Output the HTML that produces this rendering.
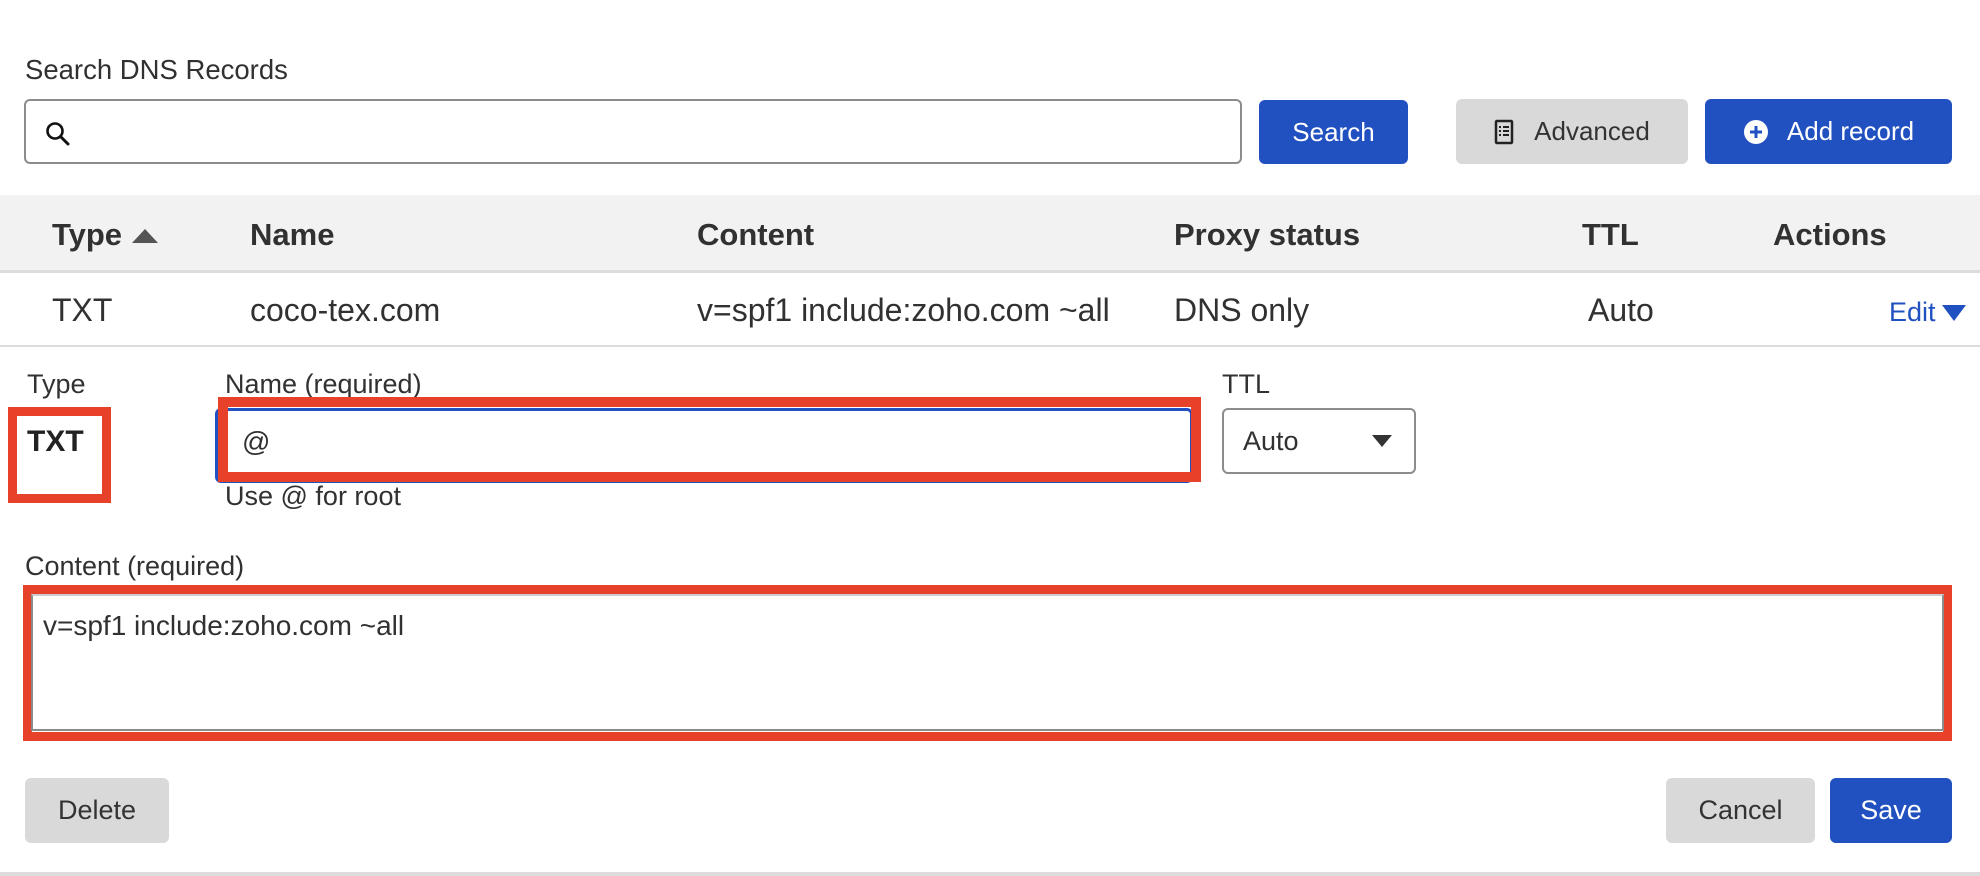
<!DOCTYPE html>
<html><head><meta charset="utf-8"><style>
*{box-sizing:border-box;margin:0;padding:0}
body{width:1980px;height:876px;background:#fff;font-family:"Liberation Sans",sans-serif;color:#313131;position:relative;overflow:hidden}
.a{position:absolute;white-space:nowrap}
.btn{position:absolute;border-radius:6px;display:flex;align-items:center;justify-content:center;font-size:26px}
.blue{background:#2150c0;color:#fff}
.gray{background:#d9d9d9;color:#333}
.th{font-weight:bold;font-size:31px;top:217px}
.td{font-size:32px;top:292px}
.lbl{font-size:27px}
</style></head><body>
<div class="a lbl" style="left:25px;top:54px;font-size:27.5px">Search DNS Records</div>
<div class="a" style="left:24px;top:99px;width:1218px;height:65px;border:2px solid #8c8c8c;border-radius:6px"></div>
<svg class="a" style="left:44px;top:120px" width="28" height="28" viewBox="0 0 28 28"><circle cx="11" cy="11" r="7.5" fill="none" stroke="#111" stroke-width="2.6"/><path d="M16.5 16.5L24 24" stroke="#111" stroke-width="3" stroke-linecap="round"/></svg>
<div class="btn blue" style="left:1259px;top:100px;width:149px;height:64px">Search</div>
<div class="btn gray" style="left:1456px;top:99px;width:232px;height:65px"><svg width="20" height="26" viewBox="0 0 20 26" style="margin-right:20px"><rect x="2" y="2" width="16" height="22" rx="1" fill="none" stroke="#222" stroke-width="2.5"/><path d="M5 8h2M9 8h6M5 12h2M9 12h6M5 16h2M9 16h6" stroke="#222" stroke-width="2"/></svg>Advanced</div>
<div class="btn blue" style="left:1705px;top:99px;width:247px;height:65px"><svg width="26" height="26" viewBox="0 0 26 26" style="margin-right:18px"><circle cx="13" cy="13" r="12" fill="#fff"/><path d="M13 7v12M7 13h12" stroke="#2150c0" stroke-width="3"/></svg>Add record</div>
<div class="a" style="left:0;top:195px;width:1980px;height:78px;background:#f2f2f2;border-bottom:3px solid #dcdcdc"></div>
<div class="a th" style="left:52px">Type</div>
<svg class="a" style="left:132px;top:229px" width="26" height="14"><path d="M0 14L13 0L26 14z" fill="#555"/></svg>
<div class="a th" style="left:250px">Name</div>
<div class="a th" style="left:697px">Content</div>
<div class="a th" style="left:1174px">Proxy status</div>
<div class="a th" style="left:1582px">TTL</div>
<div class="a th" style="left:1773px">Actions</div>
<div class="a td" style="left:52px">TXT</div>
<div class="a td" style="left:250px">coco-tex.com</div>
<div class="a td" style="left:697px">v=spf1 include:zoho.com ~all</div>
<div class="a td" style="left:1174px">DNS only</div>
<div class="a td" style="left:1588px">Auto</div>
<div class="a" style="left:1889px;color:#2150c0;font-size:27px;top:297px">Edit</div>
<svg class="a" style="left:1942px;top:305px" width="24" height="16"><path d="M0 0h24L12 16z" fill="#2150c0"/></svg>
<div class="a" style="left:0;top:345px;width:1980px;height:2px;background:#dcdcdc"></div>
<div class="a lbl" style="left:27px;top:369px">Type</div>
<div class="a lbl" style="left:225px;top:369px">Name (required)</div>
<div class="a lbl" style="left:1222px;top:369px">TTL</div>
<div class="a" style="left:8px;top:407px;width:103px;height:96px;border:9px solid #e8412a"></div>
<div class="a" style="left:27px;top:425px;font-size:30px;font-weight:bold;color:#222">TXT</div>
<div class="a" style="left:215px;top:408px;width:978px;height:75px;border:3px solid #2150c0;border-radius:6px"></div>
<div class="a" style="left:218px;top:397px;width:983px;height:85px;border:10px solid #e8412a"></div>
<div class="a" style="left:242px;top:426px;font-size:28px">@</div>
<div class="a" style="left:1222px;top:408px;width:194px;height:66px;border:2px solid #8c8c8c;border-radius:6px"></div>
<div class="a" style="left:1243px;top:426px;font-size:27px">Auto</div>
<svg class="a" style="left:1372px;top:435px" width="20" height="12"><path d="M0 0h20L10 12z" fill="#333"/></svg>
<div class="a lbl" style="left:225px;top:481px">Use @ for root</div>
<div class="a lbl" style="left:25px;top:551px">Content (required)</div>
<div class="a" style="left:23px;top:585px;width:1929px;height:156px;border:9px solid #e8412a"></div>
<div class="a" style="left:31px;top:594px;width:1913px;height:137px;border:2px solid #8c8c8c;border-top-color:#ccc"></div>
<div class="a" style="left:43px;top:610px;font-size:28px">v=spf1 include:zoho.com ~all</div>
<div class="btn gray" style="left:25px;top:778px;width:144px;height:65px;font-size:27px">Delete</div>
<div class="btn gray" style="left:1666px;top:778px;width:149px;height:65px;font-size:27px">Cancel</div>
<div class="btn blue" style="left:1830px;top:778px;width:122px;height:65px;font-size:27px">Save</div>
<div class="a" style="left:0;top:872px;width:1980px;height:4px;background:#dcdcdc"></div>
</body></html>
